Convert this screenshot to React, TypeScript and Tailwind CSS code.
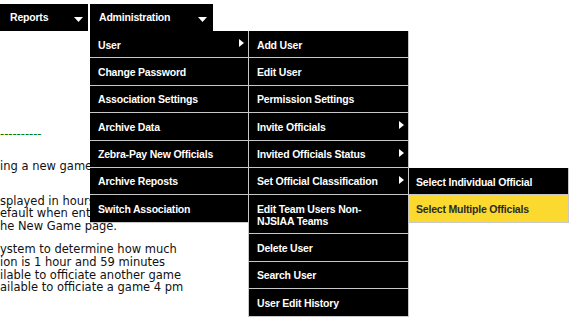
import type { ReactNode } from 'react';

type Item = { label: ReactNode; arrow?: boolean; active?: boolean };

const adminMenu: Item[] = [
  { label: 'User', arrow: true },
  { label: 'Change Password' },
  { label: 'Association Settings' },
  { label: 'Archive Data' },
  { label: 'Zebra-Pay New Officials' },
  { label: 'Archive Reposts' },
  { label: 'Switch Association' },
];

const userMenu: Item[] = [
  { label: 'Add User' },
  { label: 'Edit User' },
  { label: 'Permission Settings' },
  { label: 'Invite Officials', arrow: true },
  { label: 'Invited Officials Status', arrow: true },
  { label: 'Set Official Classification', arrow: true },
  { label: <>Edit Team Users Non-<br />NJSIAA Teams</> },
  { label: 'Delete User' },
  { label: 'Search User' },
  { label: 'User Edit History' },
];

const classMenu: Item[] = [
  { label: 'Select Individual Official' },
  { label: 'Select Multiple Officials', active: true },
];

function ArrowRight() {
  return (
    <svg width="5" height="8" viewBox="0 0 5 8" className="absolute right-[4px] top-[8px]">
      <polygon points="0,0 5,4 0,8" fill="#ffffff" />
    </svg>
  );
}

function ArrowDown() {
  return (
    <svg width="9" height="5" viewBox="0 0 9 5" className="mt-[3px]">
      <polygon points="0,0 9,0 4.5,5" fill="#ffffff" />
    </svg>
  );
}

function MenuRow({ item, pad }: { item: Item; pad: string }) {
  return (
    <div
      className={
        item.active
          ? `relative border-b border-[#c8c8c8] bg-[#fbd92e] text-[#2a2a2a] pt-[8.5px] pb-[6.2px] pr-[16px] leading-[11.7px] ${pad}`
          : `relative border-b border-[#c8c8c8] bg-black text-white pt-[8.5px] pb-[6.2px] pr-[16px] leading-[11.7px] ${pad}`
      }
    >
      {item.label}
      {item.arrow && <ArrowRight />}
    </div>
  );
}

export default function App() {
  return (
    <div className="relative w-[584px] h-[327px] overflow-hidden bg-white">
      {/* top nav */}
      <div className="flex mt-[4px] h-[27px] font-['Liberation_Sans',Arial,sans-serif] font-bold text-[10.5px] tracking-[-0.2px] text-white">
        <div className="flex items-center justify-between w-[88px] bg-black pl-[10px] pr-[5px]">
          <span>Reports</span>
          <ArrowDown />
        </div>
        <div className="flex items-center justify-between w-[123px] ml-[2px] bg-black pl-[9px] pr-[6px]">
          <span>Administration</span>
          <ArrowDown />
        </div>
      </div>

      {/* page text behind the menus */}
      <div className="font-['DejaVu_Sans',Verdana,sans-serif] text-[11.5px] leading-[12.8px] text-[#111] whitespace-nowrap">
        <div className="mt-[96.6px] text-[#008000]">----------</div>
        <div className="mt-[19.2px]">ing a new game when the</div>
        <div className="mt-[22.2px]">splayed in hours and</div>
        <div>efault when entering a</div>
        <div>he New Game page.</div>
        <div className="mt-[10px]">ystem to determine how much</div>
        <div>ion is 1 hour and 59 minutes</div>
        <div>ilable to officiate another game</div>
        <div>ailable to officiate a game 4 pm</div>
      </div>

      {/* dropdown menus */}
      <div className="absolute left-[90px] top-[31px] w-[158px] font-['Liberation_Sans',Arial,sans-serif] font-bold text-[10.5px] tracking-[-0.2px]">
        {adminMenu.map((item, i) => (
          <MenuRow key={i} item={item} pad="pl-[8px]" />
        ))}
      </div>
      <div className="absolute left-[248px] top-[31px] w-[161px] border-l border-r border-[#c8c8c8] font-['Liberation_Sans',Arial,sans-serif] font-bold text-[10.5px] tracking-[-0.2px]">
        {userMenu.map((item, i) => (
          <MenuRow key={i} item={item} pad="pl-[8px]" />
        ))}
      </div>
      <div className="absolute left-[409px] top-[168px] w-[160px] border-r border-[#c8c8c8] font-['Liberation_Sans',Arial,sans-serif] font-bold text-[10.5px] tracking-[-0.2px]">
        {classMenu.map((item, i) => (
          <MenuRow key={i} item={item} pad="pl-[7px]" />
        ))}
      </div>
    </div>
  );
}
